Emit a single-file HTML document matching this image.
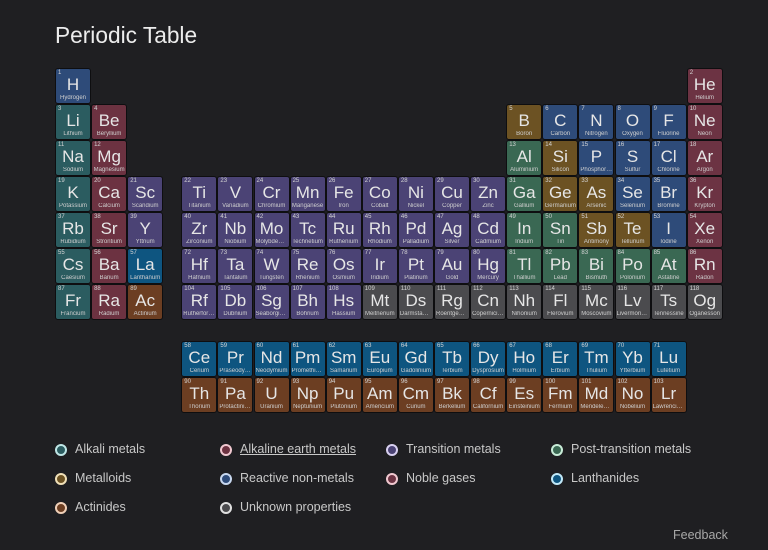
<!DOCTYPE html>
<html><head><meta charset="utf-8"><style>
html,body{margin:0;padding:0;background:#1f1f22;width:768px;height:550px;overflow:hidden;font-family:"Liberation Sans",sans-serif;}
h1{position:absolute;left:55px;top:22px;margin:0;font-size:22.7px;font-weight:normal;color:#ececec;}
.c{position:absolute;width:34px;height:34px;border:1px solid #0e0e10;border-radius:3px;box-sizing:content-box;color:#e6e6e6;overflow:hidden}
.n{position:absolute;left:2px;top:1px;font-size:6px;color:#d4d4d4}
.s{position:absolute;left:0;right:0;top:6px;text-align:center;font-size:17px;line-height:20px}
.m{position:absolute;left:1px;right:1px;bottom:2px;text-align:center;font-size:6px;color:#cfcfcf;white-space:nowrap;overflow:hidden;text-overflow:ellipsis}
.al{background:#2b5c60}.ae{background:#6c3241}.tr{background:#4b4375}.pt{background:#3a6853}.md{background:#6c5223}.nm{background:#2e4b79}.ng{background:#6c3343}.la{background:#0e5580}.ac{background:#6c3e22}.uk{background:#4b4b4e}
.lg{position:absolute;font-size:12.5px;color:#c8c8c8}
.lg i{position:absolute;left:0;top:1px;width:8px;height:8px;border-radius:50%;border:2px solid}
.lg span{position:absolute;left:20px;top:-1px;white-space:nowrap}
#fb{position:absolute;left:673px;top:528px;font-size:12.5px;color:#a8a8a8}
</style></head><body>
<h1>Periodic Table</h1>
<div id="t"></div>
<div class="lg" style="left:55px;top:443px"><i style="background:#2b5c60;border-color:#bfe6e6"></i><span>Alkali metals</span></div>
<div class="lg" style="left:220px;top:443px"><i style="background:#6c3241;border-color:#f0c8d0"></i><span style="text-decoration:underline">Alkaline earth metals</span></div>
<div class="lg" style="left:386px;top:443px"><i style="background:#4b4375;border-color:#d8d0f0"></i><span>Transition metals</span></div>
<div class="lg" style="left:551px;top:443px"><i style="background:#3a6853;border-color:#c8ecd8"></i><span>Post-transition metals</span></div>
<div class="lg" style="left:55px;top:472px"><i style="background:#6c5223;border-color:#f0e0b8"></i><span>Metalloids</span></div>
<div class="lg" style="left:220px;top:472px"><i style="background:#2e4b79;border-color:#c8d8f0"></i><span>Reactive non-metals</span></div>
<div class="lg" style="left:386px;top:472px"><i style="background:#6c3343;border-color:#f0c8d0"></i><span>Noble gases</span></div>
<div class="lg" style="left:551px;top:472px"><i style="background:#0e5580;border-color:#c0e8f8"></i><span>Lanthanides</span></div>
<div class="lg" style="left:55px;top:501px"><i style="background:#6c3e22;border-color:#f0d0b8"></i><span>Actinides</span></div>
<div class="lg" style="left:220px;top:501px"><i style="background:#4b4b4e;border-color:#e0e0e0"></i><span>Unknown properties</span></div>
<div id="fb">Feedback</div>
<script>
var S="H Hydrogen,He Helium,Li Lithium,Be Beryllium,B Boron,C Carbon,N Nitrogen,O Oxygen,F Fluorine,Ne Neon,Na Sodium,Mg Magnesium,Al Aluminium,Si Silicon,P Phosphorus,S Sulfur,Cl Chlorine,Ar Argon,K Potassium,Ca Calcium,Sc Scandium,Ti Titanium,V Vanadium,Cr Chromium,Mn Manganese,Fe Iron,Co Cobalt,Ni Nickel,Cu Copper,Zn Zinc,Ga Gallium,Ge Germanium,As Arsenic,Se Selenium,Br Bromine,Kr Krypton,Rb Rubidium,Sr Strontium,Y Yttrium,Zr Zirconium,Nb Niobium,Mo Molybdenum,Tc Technetium,Ru Ruthenium,Rh Rhodium,Pd Palladium,Ag Silver,Cd Cadmium,In Indium,Sn Tin,Sb Antimony,Te Tellurium,I Iodine,Xe Xenon,Cs Caesium,Ba Barium,La Lanthanum,Ce Cerium,Pr Praseodymium,Nd Neodymium,Pm Promethium,Sm Samarium,Eu Europium,Gd Gadolinium,Tb Terbium,Dy Dysprosium,Ho Holmium,Er Erbium,Tm Thulium,Yb Ytterbium,Lu Lutetium,Hf Hafnium,Ta Tantalum,W Tungsten,Re Rhenium,Os Osmium,Ir Iridium,Pt Platinum,Au Gold,Hg Mercury,Tl Thallium,Pb Lead,Bi Bismuth,Po Polonium,At Astatine,Rn Radon,Fr Francium,Ra Radium,Ac Actinium,Th Thorium,Pa Protactinium,U Uranium,Np Neptunium,Pu Plutonium,Am Americium,Cm Curium,Bk Berkelium,Cf Californium,Es Einsteinium,Fm Fermium,Md Mendelevium,No Nobelium,Lr Lawrencium,Rf Rutherfordium,Db Dubnium,Sg Seaborgium,Bh Bohrium,Hs Hassium,Mt Meitnerium,Ds Darmstadtium,Rg Roentgenium,Cn Copernicium,Nh Nihonium,Fl Flerovium,Mc Moscovium,Lv Livermorium,Ts Tennessine,Og Oganesson".split(",");
function cat(z){
 if([3,11,19,37,55,87].indexOf(z)>=0)return"al";
 if([4,12,20,38,56,88].indexOf(z)>=0)return"ae";
 if([2,10,18,36,54,86].indexOf(z)>=0)return"ng";
 if([1,6,7,8,9,15,16,17,34,35,53].indexOf(z)>=0)return"nm";
 if([5,14,32,33,51,52].indexOf(z)>=0)return"md";
 if([13,31,49,50,81,82,83,84,85].indexOf(z)>=0)return"pt";
 if(z>=57&&z<=71)return"la";if(z>=89&&z<=103)return"ac";
 if(z>=109)return"uk";return"tr";}
function pos(z){
 if(z==1)return[1,1];if(z==2)return[18,1];
 if(z<=4)return[z-2,2];if(z<=10)return[z+8,2];
 if(z<=12)return[z-10,3];if(z<=18)return[z,3];
 if(z<=36)return[z-18,4];if(z<=54)return[z-36,5];
 if(z<=57)return[z-54,6];if(z<=71)return[z-54,8.6];if(z<=86)return[z-68,6];
 if(z<=89)return[z-86,7];if(z<=103)return[z-86,9.6];return[z-100,7];}
var h="";
for(var z=1;z<=118;z++){var p=S[z-1].split(" "),q=pos(z),c=q[0],r=q[1];
 var x=55+(c-1)*36.1+(c>=4?18:0),y=68+(r-1)*36;if(r>8)y=341+(r-8.6)*36;
 h+='<div class="c '+cat(z)+'" style="left:'+x.toFixed(1)+'px;top:'+y.toFixed(1)+'px"><div class="n">'+z+'</div><div class="s">'+p[0]+'</div><div class="m">'+p[1]+'</div></div>';}
document.getElementById("t").innerHTML=h;
</script>
</body></html>
